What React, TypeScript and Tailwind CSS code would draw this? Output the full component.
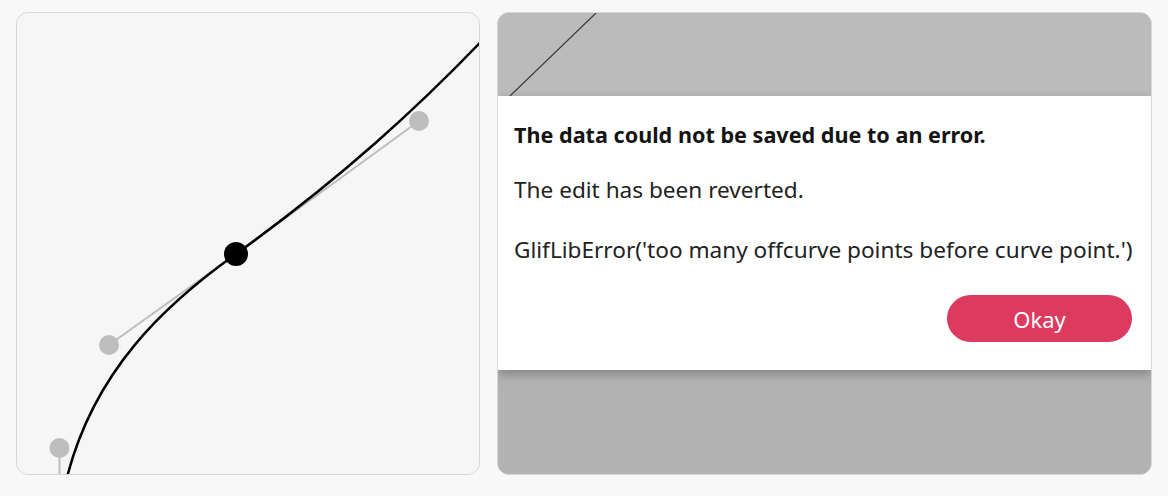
import React from "react";

function CurvePanel() {
  return (
    <div className="w-[464px] h-[463px] rounded-xl border border-[#d8d8d8] bg-[#f6f6f6] overflow-hidden">
      <svg width="462" height="461" viewBox="17 13 462 461" className="block">
        <line x1="236" y1="254" x2="419" y2="121" stroke="#bdbdbd" strokeWidth="2" />
        <line x1="236" y1="254" x2="109" y2="345" stroke="#bdbdbd" strokeWidth="2" />
        <line x1="59.5" y1="448" x2="59.5" y2="500" stroke="#bdbdbd" strokeWidth="2" />
        <path
          d="M236 254 C330 186 420 110 520 0"
          fill="none"
          stroke="#000"
          strokeWidth="2.5"
        />
        <path
          d="M236 254 C170 301 90 370 64 490"
          fill="none"
          stroke="#000"
          strokeWidth="2.5"
        />
        <circle cx="419" cy="121" r="10" fill="#bdbdbd" />
        <circle cx="109" cy="345" r="10" fill="#bdbdbd" />
        <circle cx="59.5" cy="448" r="10" fill="#bdbdbd" />
        <circle cx="236" cy="254" r="12" fill="#000" />
      </svg>
    </div>
  );
}

function DialogPanel() {
  return (
    <div className="flex-1 h-[463px] rounded-xl border border-[#d8d8d8] overflow-hidden flex flex-col bg-[#b4b4b4]">
      <div className="h-[83px] bg-[#bbbbbb] shrink-0">
        <svg width="653" height="83" className="block">
          <line x1="98" y1="0" x2="12" y2="83" stroke="#3a3a3a" strokeWidth="1.2" />
        </svg>
      </div>
      <div className="relative z-10 bg-white pl-4 pr-[19px] pt-6 pb-[28px] shadow-[0_4px_10px_rgba(0,0,0,0.28)] shrink-0">
        <p className="text-[21.6px] leading-[30px] font-bold text-[#141414] whitespace-nowrap">
          The data could not be saved due to an error.
        </p>
        <p className="mt-[25px] text-[22.6px] leading-[30px] text-[#222] whitespace-nowrap">
          The edit has been reverted.
        </p>
        <p className="mt-[30px] text-[22.6px] leading-[30px] text-[#222] whitespace-nowrap">
          GlifLibError('too many offcurve points before curve point.')
        </p>
        <div className="mt-[30px] flex justify-end">
          <button className="w-[185px] h-[47px] rounded-full bg-[#dc3a5f] text-white text-[22px] leading-[30px]">
            Okay
          </button>
        </div>
      </div>
      <div className="flex-1 bg-[#b3b3b3]" />
    </div>
  );
}

export default function App() {
  return (
    <div
      className="w-[1168px] h-[496px] bg-[#f8f8f8] flex gap-[17px] px-4 pt-3"
      style={{ fontFamily: '"Noto Sans", sans-serif' }}
    >
      <CurvePanel />
      <DialogPanel />
    </div>
  );
}
